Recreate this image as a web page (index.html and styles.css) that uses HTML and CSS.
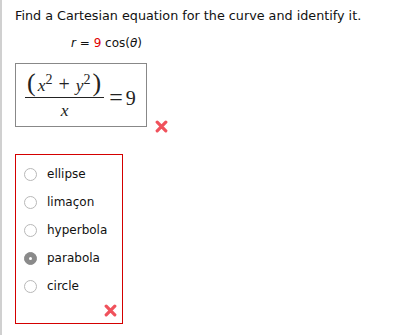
FILE: index.html
```html
<!DOCTYPE html>
<html>
<head>
<meta charset="utf-8">
<link rel="stylesheet" href="styles.css">
</head>
<body>
<div class="page">
  <p class="prompt">Find a Cartesian equation for the curve and identify it.</p>
  <p class="given"><i>r</i> = <span class="red">9</span> cos(<i class="theta">θ</i>)</p>
  <div class="answer-row">
    <div class="eqbox">
      <span class="frac">
        <span class="num"><span class="paren">(</span><i class="mx">x</i><sup>2</sup><span class="op">+</span><i>y</i><sup>2</sup><span class="paren rp">)</span></span>
        <span class="den"><i>x</i></span>
      </span>
      <span class="eq"><span class="eqsign">=</span><span class="eqval">9</span></span>
    </div>
    <svg class="xmark" width="13" height="13" viewBox="0 0 13 13"><path d="M2.2 2.2 L10.8 10.8 M10.8 2.2 L2.2 10.8" stroke="#f0525c" stroke-width="3.2" stroke-linecap="round"/></svg>
  </div>
  <div class="choices">
    <label class="opt"><span class="radio"></span>ellipse</label>
    <label class="opt"><span class="radio"></span>limaçon</label>
    <label class="opt"><span class="radio"></span>hyperbola</label>
    <label class="opt"><span class="radio on"></span>parabola</label>
    <label class="opt"><span class="radio"></span>circle</label>
    <div class="choice-foot">
      <svg class="xmark" width="13" height="13" viewBox="0 0 13 13"><path d="M2.2 2.2 L10.8 10.8 M10.8 2.2 L2.2 10.8" stroke="#f0525c" stroke-width="3.2" stroke-linecap="round"/></svg>
    </div>
  </div>
</div>
</body>
</html>
```
FILE: styles.css
```css
html, body { margin: 0; padding: 0; background: #fff; }
body { width: 417px; height: 335px; overflow: hidden; }
.page {
  border-left: 2px solid #d0d0d0;
  height: 335px;
  box-sizing: border-box;
  padding: 8px 0 0 13px;
  font-family: "DejaVu Sans", Verdana, sans-serif;
  font-size: 12px;
  color: #111;
}
.prompt { margin: 0; line-height: 16px; font-size: 12.75px; }
.given { margin: 11px 0 0 56px; line-height: 16px; }
.given i { font-style: italic; }
.red { color: #e00000; }
.answer-row { display: flex; align-items: flex-end; margin-top: 12px; }
.eqbox {
  border: 1px solid #888;
  width: 132px;
  height: 64px;
  box-sizing: border-box;
  display: flex;
  align-items: flex-start;
  padding: 8px 0 0 9px;
  font-family: "Liberation Serif", "Times New Roman", serif;
  font-size: 20px;
  color: #222;
}
.eqbox i { font-style: italic; font-size: 17.5px; font-family: "Liberation Serif", "Times New Roman", serif; }
.frac { display: inline-flex; flex-direction: column; align-items: center; }
.num {
  border-bottom: 1px solid #222;
  padding: 0 3px 0 2px;
  height: 25px;
  line-height: 25px;
  white-space: nowrap;
}
.den { line-height: 18px; padding-top: 2px; }
.paren { font-size: 26px; line-height: 20px; }
.mx { margin-left: 2px; }
.rp { margin-left: 2px; }
.op { margin: 0 6px; }
sup { font-size: 14px; vertical-align: 7px; line-height: 0; }
.eq { margin: 15px 0 0 5px; line-height: 20px; white-space: nowrap; display: flex; align-items: baseline; }
.eqsign { font-size: 24px; line-height: 20px; }
.eqval { margin-left: 3px; }
.xmark { display: block; }
.answer-row > .xmark { margin: 0 0 -6px 8px; }
.choices {
  margin-top: 27px;
  border: 1px solid #d40000;
  width: 108px;
  height: 170px;
  box-sizing: border-box;
  padding: 5px 0 0 8px;
  display: flex;
  flex-direction: column;
}
.opt { display: flex; align-items: center; height: 28px; }
.radio {
  width: 13px; height: 13px;
  border: 1px solid #b8b8b8;
  border-radius: 50%;
  margin-right: 10px;
  box-sizing: border-box;
  background: #fff;
  position: relative;
}
.radio.on { background: #8a8a8a; border-color: #8a8a8a; }
.radio.on::after {
  content: ""; position: absolute; left: 4px; top: 4px;
  width: 3px; height: 3px; border-radius: 50%; background: #fff;
}
.choice-foot { display: flex; justify-content: flex-end; padding-right: 5px; margin-top: 4px; }
```
